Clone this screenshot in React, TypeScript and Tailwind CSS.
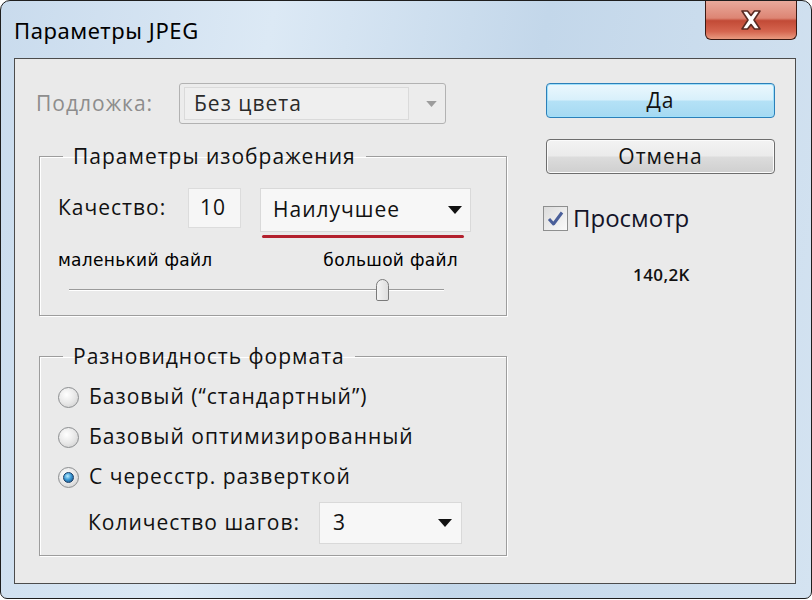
import React from "react";

function Arrow({ color = "#111", w = 14, h = 8 }: { color?: string; w?: number; h?: number }) {
  return (
    <svg width={w} height={h} viewBox="0 0 14 8">
      <path d="M0 0 L14 0 L7 8 Z" fill={color} />
    </svg>
  );
}

function Radio({ checked, label }: { checked?: boolean; label: string }) {
  return (
    <div className="flex items-center h-[40px]">
      <div className="w-[21px] h-[21px] rounded-full border border-[#8c8e90] bg-[radial-gradient(circle_at_40%_35%,#ffffff_0%,#e6e6e6_55%,#c9c9c9_100%)] flex items-center justify-center">
        {checked && (
          <div className="w-[11px] h-[11px] rounded-full bg-[radial-gradient(circle_at_40%_35%,#b9ecff_0%,#3c9ad6_45%,#0f3f73_100%)] border border-[#183d66]" />
        )}
      </div>
      <span className="ml-[10px] text-[21px] tracking-[1px] text-[#111]">{label}</span>
    </div>
  );
}

function GroupBox({ title, className, children }: { title: string; className: string; children: React.ReactNode }) {
  return (
    <fieldset
      className={
        "ml-[3px] w-[468px] border border-[#9d9d9d] shadow-[inset_1px_1px_0_#ffffff,1px_1px_0_#ffffff] px-[18px] " +
        className
      }
    >
      <legend className="ml-[5px] px-[10px] text-[21px] leading-[28px] tracking-[1px] text-[#111]">{title}</legend>
      {children}
    </fieldset>
  );
}

export default function App() {
  return (
    <div className="w-[812px] h-[600px] bg-white font-['Open_Sans',sans-serif]">
      <div className="w-[812px] h-[599px] flex flex-col rounded-t-[10px] rounded-b-[7px] border border-[#1e1e1e] bg-[linear-gradient(100deg,#c9dbed_0%,#dce9f5_30%,#c3d7ea_60%,#d4e3f1_100%)]">
        {/* title bar */}
        <div className="h-[57px] flex items-start justify-between">
          <div className="ml-[13px] mt-[15px] text-[22px] leading-[28px] tracking-[0.6px] text-black font-['Noto_Sans',sans-serif]">
            Параметры JPEG
          </div>
          <div className="mr-[14px] w-[92px] h-[39px] rounded-b-[6px] border border-t-0 border-[#3a1a14] bg-[linear-gradient(180deg,#e9aa9c_0%,#dd8574_45%,#c24a36_52%,#d5654f_80%,#e99a80_100%)] flex items-center justify-center">
            <svg width="26" height="22" viewBox="0 0 26 22">
              <path
                d="M4 2 L9.5 2 L13 6.5 L16.5 2 L22 2 L16 11 L22 20 L16.5 20 L13 15.5 L9.5 20 L4 20 L10 11 Z"
                fill="#ffffff"
                stroke="#5a2a22"
                strokeWidth="1.6"
                strokeLinejoin="round"
              />
            </svg>
          </div>
        </div>

        {/* client area */}
        <div className="ml-[13px] mr-[15px] h-[526px] border border-[#4c4c4c] bg-[#eaeaea] flex pt-[24px]">
          {/* left column */}
          <div className="w-[492px] pl-[21px] flex flex-col">
            <div className="flex items-center h-[41px]">
              <span className="w-[143px] text-[21px] tracking-[1px] text-[#8d8d8d]">Подложка:</span>
              <div className="w-[267px] h-[41px] rounded-[3px] border border-[#b2b2b2] bg-[#ececec] flex items-center pl-[4px] pr-[8px]">
                <div className="w-[225px] h-[33px] border border-[#dadada] bg-[#efefef] flex items-center pl-[9px] text-[21px] tracking-[1px] text-[#2a2a2a]">
                  Без цвета
                </div>
                <div className="ml-auto">
                  <Arrow color="#9c9c9c" w={11} h={6} />
                </div>
              </div>
            </div>

            <GroupBox title="Параметры изображения" className="mt-[18px] h-[174px]">
              <div className="mt-[18px] flex items-start">
                <span className="w-[130px] h-[40px] flex items-center text-[21px] tracking-[1px] text-[#111]">Качество:</span>
                <div className="w-[53px] h-[40px] border border-[#dcdcdc] bg-[#f6f6f6] flex items-center pl-[11px] text-[21px] tracking-[1px] text-[#111]">
                  10
                </div>
                <div className="ml-[19px] flex flex-col">
                  <div className="w-[211px] h-[44px] border border-[#d9d9d9] bg-[#f7f7f7] flex items-center pl-[12px] pr-[8px] text-[21px] tracking-[1px] text-[#111]">
                    Наилучшее
                    <div className="ml-auto">
                      <Arrow />
                    </div>
                  </div>
                  <div className="mt-[3px] ml-[2px] w-[202px] h-[3px] rounded-full bg-[#b3202d]" />
                </div>
              </div>
              <div className="mt-[11px] w-[400px] flex justify-between text-[17px] leading-[22px] tracking-[0.3px] text-black font-['DejaVu_Sans',sans-serif]">
                <span>маленький файл</span>
                <span>большой файл</span>
              </div>
              <div className="mt-[8px] ml-[11px] w-[375px] h-[22px] flex items-center relative">
                <div className="w-full h-[2px] border-t border-[#9a9a9a] border-b border-b-[#ffffff]" />
                <div className="absolute left-[307px] top-0 w-[13px] h-[22px] rounded-t-[7px] rounded-b-[2px] border border-[#7a7a7a] bg-[linear-gradient(90deg,#f4f4f4,#dedede)]" />
              </div>
            </GroupBox>

            <GroupBox title="Разновидность формата" className="mt-[26px] h-[214px]">
              <div className="mt-[7px] flex flex-col">
                <Radio label="Базовый (“стандартный”)" />
                <Radio label="Базовый оптимизированный" />
                <Radio checked label="С чересстр. разверткой" />
              </div>
              <div className="mt-[5px] ml-[30px] flex items-center">
                <span className="w-[231px] text-[21px] tracking-[1px] text-[#111]">Количество шагов:</span>
                <div className="w-[143px] h-[42px] border border-[#d9d9d9] bg-[#f7f7f7] flex items-center pl-[13px] pr-[9px] text-[21px] text-[#111]">
                  3
                  <div className="ml-auto">
                    <Arrow />
                  </div>
                </div>
              </div>
            </GroupBox>
          </div>

          {/* right column */}
          <div className="ml-[39px] w-[229px] flex flex-col">
            <div className="h-[35px] rounded-[4px] border border-[#2c7fb8] shadow-[inset_0_0_0_1px_#9fe0fb] bg-[linear-gradient(180deg,#ebf7fd_0%,#d8f0fb_48%,#b4e1f6_52%,#a5d9f2_100%)] flex items-center justify-center text-[21px] tracking-[1px] text-[#111]">
              Да
            </div>
            <div className="mt-[21px] h-[35px] rounded-[4px] border border-[#6d6d6d] shadow-[inset_0_0_0_1px_#fbfbfb] bg-[linear-gradient(180deg,#f3f3f3_0%,#ebebeb_48%,#dcdcdc_52%,#cfcfcf_100%)] flex items-center justify-center text-[21px] tracking-[1px] text-[#111]">
              Отмена
            </div>
            <div className="mt-[31px] -ml-[3px] flex items-center h-[26px]">
              <div className="w-[25px] h-[25px] border border-[#8e8f8f] bg-[linear-gradient(135deg,#dcdcdc,#fafafa)] flex items-center justify-center">
                <svg width="17" height="17" viewBox="0 0 17 17">
                  <path d="M2 9 L6.5 14 L15 2.5" fill="none" stroke="#4a5f9a" strokeWidth="3" strokeLinejoin="round" />
                </svg>
              </div>
              <span className="ml-[5px] text-[24px] text-[#141428]">Просмотр</span>
            </div>
            <div className="mt-[33px] pl-[2px] text-center text-[17px] leading-[22px] tracking-[0.4px] font-semibold text-[#111]">140,2K</div>
          </div>
        </div>
      </div>
    </div>
  );
}
